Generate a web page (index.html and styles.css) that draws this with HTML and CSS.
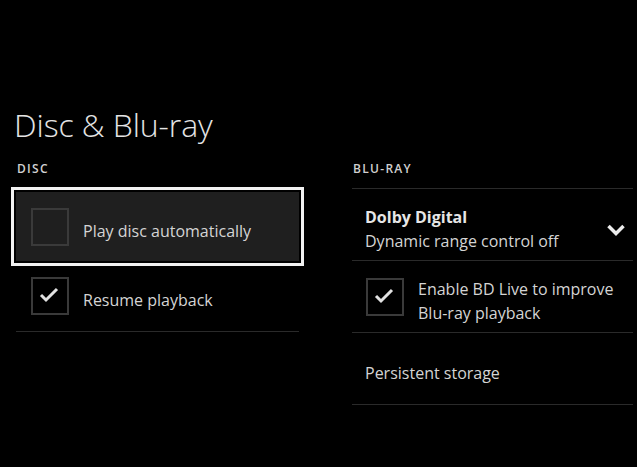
FILE: index.html
```html
<!DOCTYPE html>
<html lang="en">
<head>
  <meta charset="UTF-8">
  <title>Disc &amp; Blu-ray</title>
  <link rel="stylesheet" href="styles.css">
</head>
<body>

  <h1 class="page-title">Disc &amp; Blu-ray</h1>

  <div class="columns">

    <!-- Disc -->
    <section class="column column-disc">
      <h2 class="section-label">DISC</h2>
      <ul class="settings">
        <li class="row row-check row-focused">
          <span class="checkbox"></span>
          <span class="row-text">Play disc automatically</span>
        </li>
        <li class="row row-check">
          <span class="checkbox">
            <svg width="38" height="38" viewBox="0 0 38 38"><polyline points="10,18 15,23 26,12" /></svg>
          </span>
          <span class="row-text">Resume playback</span>
        </li>
      </ul>
    </section>

    <!-- Blu-ray -->
    <section class="column column-bluray">
      <h2 class="section-label">BLU-RAY</h2>
      <ul class="settings settings-bordered">
        <li class="row row-select">
          <div class="row-text">
            <div class="row-title">Dolby Digital</div>
            <div>Dynamic range control off</div>
          </div>
          <svg class="chevron" width="18" height="12" viewBox="0 0 18 12"><polyline points="1.5,2 9,9.5 16.5,2" /></svg>
        </li>
        <li class="row row-check">
          <span class="checkbox">
            <svg width="38" height="38" viewBox="0 0 38 38"><polyline points="10,18 15,23 26,12" /></svg>
          </span>
          <span class="row-text">Enable BD Live to improve<br>Blu-ray playback</span>
        </li>
        <li class="row row-plain">
          <span class="row-text">Persistent storage</span>
        </li>
      </ul>
    </section>

  </div>

</body>
</html>
```

FILE: styles.css
```css
/* Reset */
* {
  margin: 0;
  padding: 0;
  box-sizing: border-box;
}

body {
  background: #000;
  color: #d4d4d4;
  font-family: 'Open Sans', 'Noto Sans', sans-serif;
  font-size: 16px;
  width: 637px;
  height: 467px;
  overflow: hidden;
  padding: 0 4px 0 16px;
}

/* Title */
.page-title {
  font-size: 32px;
  font-weight: 300;
  color: #e4e4e4;
  line-height: 40px;
  margin: 105px 0 0 -2px;
  letter-spacing: -0.1px;
}

/* Columns */
.columns {
  display: flex;
  gap: 53px;
  margin-top: 16px;
}

.column-disc {
  width: 283px;
}

.column-bluray {
  width: 281px;
}

.section-label {
  font-size: 12px;
  font-weight: 600;
  letter-spacing: 1.3px;
  color: #d0d0d0;
  line-height: 16px;
  padding-left: 1px;
}

.settings {
  list-style: none;
}

.column-disc .settings {
  margin-top: 15px;
}

.settings-bordered {
  margin-top: 11px;
  border-top: 1px solid #2a2a2a;
}

/* Rows */
.row {
  display: flex;
  align-items: center;
  border-bottom: 1px solid #2a2a2a;
}

.column-disc .row {
  height: 69px;
  padding-left: 15px;
}

.column-bluray .row {
  height: 72px;
  padding-left: 13px;
}

.column-bluray .row-check {
  padding-left: 14px;
}

.row-focused {
  background: #1f1f1f;
  outline: 3px solid #f2f2f2;
  outline-offset: 2px;
  border-bottom: none;
}

.column-disc .row-focused + .row {
  height: 71px;
}

.row-text {
  line-height: 24px;
  padding-top: 8px;
}

.row-check .checkbox {
  flex: none;
  width: 38px;
  height: 38px;
  border: 2px solid #3a3a3a;
  margin-right: 14px;
  position: relative;
}

.checkbox svg {
  position: absolute;
  top: -2px;
  left: -2px;
}

.checkbox polyline {
  fill: none;
  stroke: #e2e2e2;
  stroke-width: 3;
}

.row-title {
  font-weight: 700;
  color: #e6e6e6;
}

.row-select {
  justify-content: space-between;
  padding-right: 8px;
}

.chevron {
  margin-top: 10px;
}

.chevron polyline {
  fill: none;
  stroke: #ececec;
  stroke-width: 3.5;
}
```
